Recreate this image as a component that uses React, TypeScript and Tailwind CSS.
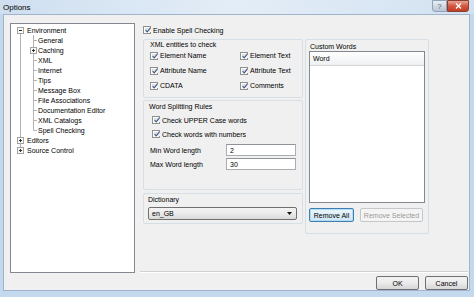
import React from 'react';

const font = "font-['Liberation_Sans',Arial,sans-serif]";

const Check = () => (
  <span className="w-[8px] h-[8px] border border-[#8e8f8f] bg-white p-px shrink-0 flex">
    <span className="flex-1 bg-linear-to-br from-[#d9dadb] to-[#fafafa] flex items-center justify-center">
      <svg width="6" height="6" viewBox="0 0 6 6">
        <path d="M0.6 3.1 L2.2 4.9 L5.4 0.8" stroke="#3d5a86" strokeWidth="1.1" fill="none" />
      </svg>
    </span>
  </span>
);

const CheckRow = ({ label }: { label: string }) => (
  <div className="flex items-center gap-[2px]">
    <Check />
    <span>{label}</span>
  </div>
);

type Node = { label: string; level: 0 | 1; kind: 'open' | 'closed' | 'leaf'; first?: boolean; last?: boolean; lastChild?: boolean };

const tree: Node[] = [
  { label: 'Environment', level: 0, kind: 'open', first: true },
  { label: 'General', level: 1, kind: 'leaf' },
  { label: 'Caching', level: 1, kind: 'closed' },
  { label: 'XML', level: 1, kind: 'leaf' },
  { label: 'Internet', level: 1, kind: 'leaf' },
  { label: 'Tips', level: 1, kind: 'leaf' },
  { label: 'Message Box', level: 1, kind: 'leaf' },
  { label: 'File Associations', level: 1, kind: 'leaf' },
  { label: 'Documentation Editor', level: 1, kind: 'leaf' },
  { label: 'XML Catalogs', level: 1, kind: 'leaf' },
  { label: 'Spell Checking', level: 1, kind: 'leaf', lastChild: true },
  { label: 'Editors', level: 0, kind: 'closed' },
  { label: 'Source Control', level: 0, kind: 'closed', last: true },
];

const Expander = ({ cx, open }: { cx: number; open: boolean }) => (
  <g>
    <rect x={cx - 3} y={2.5} width={6} height={6} fill="#f7f7f7" stroke="#a3a3a3" strokeWidth="1" />
    <line x1={cx - 1.5} y1={5.5} x2={cx + 1.5} y2={5.5} stroke="#333" strokeWidth="1" />
    {!open && <line x1={cx} y1={4} x2={cx} y2={7} stroke="#333" strokeWidth="1" />}
  </g>
);

const TreeRow = ({ n }: { n: Node }) => {
  const line = '#b4b4b4';
  return (
    <div className="flex items-center h-[10px]">
      <svg width={n.level === 0 ? 16 : 27} height={10} className="shrink-0">
        {n.level === 0 ? (
          <>
            {!n.first && <line x1={9.5} y1={0} x2={9.5} y2={2.5} stroke={line} />}
            {!n.last && <line x1={9.5} y1={8.5} x2={9.5} y2={10} stroke={line} />}
            <Expander cx={9.5} open={n.kind === 'open'} />
          </>
        ) : (
          <>
            <line x1={9.5} y1={0} x2={9.5} y2={10} stroke={line} />
            <line x1={22.5} y1={0} x2={22.5} y2={n.lastChild ? 5.5 : 10} stroke={line} />
            <line x1={22.5} y1={5.5} x2={26} y2={5.5} stroke={line} />
            {n.kind === 'closed' && <Expander cx={22.5} open={false} />}
          </>
        )}
      </svg>
      <span className="whitespace-nowrap">{n.label}</span>
    </div>
  );
};

const Button = ({ label, w, variant }: { label: string; w: string; variant?: 'focus' | 'disabled' }) => (
  <div
    className={
      `${w} h-[14px] rounded-[2px] border flex items-center justify-center ` +
      (variant === 'disabled'
        ? 'border-[#c4c8cb] bg-[#f4f4f4] text-[#9a9a9a]'
        : variant === 'focus'
        ? 'border-[#3c7fb1] bg-linear-to-b from-[#eaf6fd] to-[#cfe6f6] text-black shadow-[0_0_0_1px_#b6dcf3_inset]'
        : 'border-[#707070] bg-linear-to-b from-[#f2f2f2] via-[#ebebeb] to-[#d6d6d6] text-black')
    }
  >
    {label}
  </div>
);

const TextBox = ({ value }: { value: string }) => (
  <div className="ml-auto w-[70px] h-[12px] border border-[#abadb3] border-t-[#8e9299] bg-white flex items-center pl-[3px]">
    {value}
  </div>
);

export default function App() {
  return (
    <div className={`${font} w-[474px] h-[297px] bg-[#c5d9ee] flex flex-col text-[7px] text-black leading-none overflow-hidden`}>
      {/* title bar */}
      <div className="h-[14px] flex items-start bg-linear-to-r from-[#cfdff0] via-[#e3edf7] to-[#d3e2f1]">
        <span className="text-[8px] mt-[4px] ml-[3px]">Options</span>
        <div className="ml-auto mr-[5px] flex">
          <div className="w-[15px] h-[12px] rounded-bl-[3px] border border-[#8ea3ba] bg-linear-to-b from-[#e9eef4] to-[#b9c6d4] flex items-center justify-center text-[7px] text-[#50606f]">
            ?
          </div>
          <div className="w-[22px] h-[12px] rounded-br-[3px] border border-[#8c3d31] bg-linear-to-b from-[#e9a493] via-[#d2563f] to-[#c23d23] flex items-center justify-center">
            <svg width="7" height="6" viewBox="0 0 7 6">
              <path d="M1 0.5 L6 5.5 M6 0.5 L1 5.5" stroke="#fff" strokeWidth="1.4" />
            </svg>
          </div>
        </div>
      </div>

      {/* client area */}
      <div className="ml-[3px] w-[467px] h-[277px] bg-[#f0f0f0] border border-[#9fb4cb] flex items-start pt-[8px]">
        {/* tree */}
        <div className="ml-[6px] w-[125px] h-[250px] bg-white border border-[#828790] pt-[1px] shrink-0">
          {tree.map((n) => (
            <TreeRow key={n.label} n={n} />
          ))}
        </div>

        {/* right column */}
        <div className="ml-[5px] w-[328px] flex flex-col">
          <div className="h-[248px] flex">
            <div className="pl-[3px] w-[163px] flex flex-col">
              <div className="h-[14px] flex items-center">
                <CheckRow label="Enable Spell Checking" />
              </div>

              <div className="mt-[2px] h-[59px] border border-[#d5dfe5] rounded-[2px] pl-[6px]">
                <div className="h-[8px] flex items-center">XML entities to check</div>
                <div className="grid grid-cols-[90px_1fr] auto-rows-[15px] items-center">
                  <CheckRow label="Element Name" />
                  <CheckRow label="Element Text" />
                  <CheckRow label="Attribute Name" />
                  <CheckRow label="Attribute Text" />
                  <CheckRow label="CDATA" />
                  <CheckRow label="Comments" />
                </div>
              </div>

              <div className="mt-[2px] h-[90px] border border-[#d5dfe5] rounded-[2px] pl-[5px] pr-[6px]">
                <div className="h-[10px] flex items-center">Word Splitting Rules</div>
                <div className="mt-[2px] pl-[3px]">
                  <div className="h-[14px] flex items-center">
                    <CheckRow label="Check UPPER Case words" />
                  </div>
                  <div className="h-[14px] flex items-center">
                    <CheckRow label="Check words with numbers" />
                  </div>
                </div>
                <div className="mt-[2px] h-[14px] flex items-center pl-[1px]">
                  <span>Min Word length</span>
                  <TextBox value="2" />
                </div>
                <div className="h-[14px] flex items-center pl-[1px]">
                  <span>Max Word length</span>
                  <TextBox value="30" />
                </div>
              </div>

              <div className="mt-[3px] h-[31px] border border-[#d5dfe5] rounded-[2px] pl-[4px] pr-[5px]">
                <div className="h-[10px] flex items-center">Dictionary</div>
                <div className="mt-[3px] h-[13px] rounded-[2px] border border-[#707070] bg-linear-to-b from-[#f3f3f3] via-[#ebebeb] to-[#d9d9d9] flex items-center pl-[3px] pr-[4px]">
                  <span>en_GB</span>
                  <svg width="5" height="3" viewBox="0 0 5 3" className="ml-auto">
                    <path d="M0 0 H5 L2.5 3 Z" fill="#111" />
                  </svg>
                </div>
              </div>
            </div>

            <div className="ml-[2px] mt-[16px] w-[124px] h-[195px] border border-[#d5dfe5] rounded-[2px] pl-[3px]">
              <div className="h-[11px] flex items-center pl-[1px] pt-[1px]">Custom Words</div>
              <div className="w-[116px] h-[152px] border border-[#828790] bg-white">
                <div className="h-[14px] bg-linear-to-b from-white to-[#eef0f3] border-b border-[#d5d5d5] flex items-center pl-[3px]">
                  Word
                </div>
              </div>
              <div className="mt-[5px] flex gap-[6px]">
                <Button label="Remove All" w="w-[45px]" variant="focus" />
                <Button label="Remove Selected" w="w-[63px]" variant="disabled" />
              </div>
            </div>
          </div>

          <div className="h-px bg-[#d0d0d0] border-b border-white box-content" />
          <div className="mt-[3px] flex justify-end gap-[6px]">
            <Button label="OK" w="w-[43px]" />
            <Button label="Cancel" w="w-[43px]" />
          </div>
        </div>
      </div>
    </div>
  );
}
